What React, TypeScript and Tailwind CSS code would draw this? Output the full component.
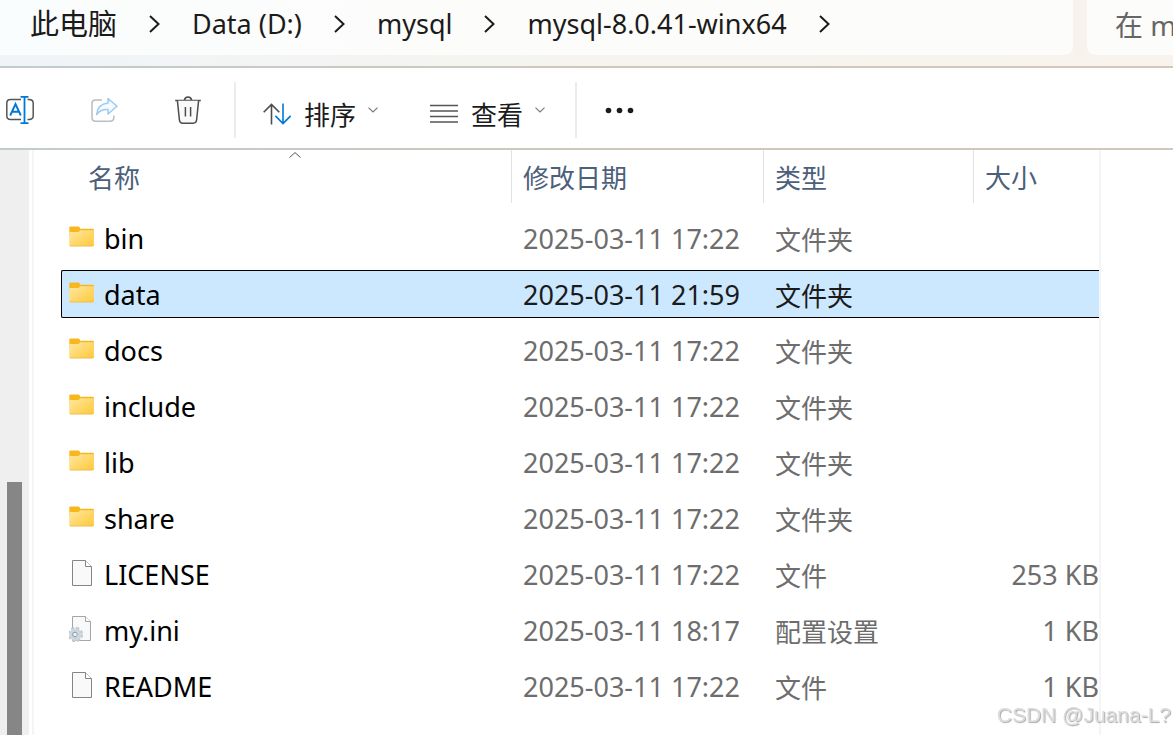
import React, { useState } from 'react';

type FileKind = 'folder' | 'file' | 'config';

const path = ['此电脑', 'Data (D:)', 'mysql', 'mysql-8.0.41-winx64'];

const files: { name: string; date: string; type: string; size: string; kind: FileKind }[] = [
    { name: 'bin', date: '2025-03-11 17:22', type: '文件夹', size: '', kind: 'folder' },
    { name: 'data', date: '2025-03-11 21:59', type: '文件夹', size: '', kind: 'folder' },
    { name: 'docs', date: '2025-03-11 17:22', type: '文件夹', size: '', kind: 'folder' },
    { name: 'include', date: '2025-03-11 17:22', type: '文件夹', size: '', kind: 'folder' },
    { name: 'lib', date: '2025-03-11 17:22', type: '文件夹', size: '', kind: 'folder' },
    { name: 'share', date: '2025-03-11 17:22', type: '文件夹', size: '', kind: 'folder' },
    { name: 'LICENSE', date: '2025-03-11 17:22', type: '文件', size: '253 KB', kind: 'file' },
    { name: 'my.ini', date: '2025-03-11 18:17', type: '配置设置', size: '1 KB', kind: 'config' },
    { name: 'README', date: '2025-03-11 17:22', type: '文件', size: '1 KB', kind: 'file' },
];

function FolderIcon() {
    return (
        <svg width="26" height="22" viewBox="0 0 26 22">
            <defs>
                <linearGradient id="folder" x1="0" y1="0" x2="1" y2="1">
                    <stop offset="0" stopColor="#ffe8a3" />
                    <stop offset="1" stopColor="#ffc937" />
                </linearGradient>
            </defs>
            <path d="M.3 1.6Q.3 .4 1.5 .4H9.3Q10.6 .4 11.2 2.8H23.8Q24.9 2.8 24.9 3.9V10H.3z" fill="#f8b71d" />
            <path d="M.3 6H8.6Q9.5 6 10.1 5.4L11.3 4.2H24.9V19Q24.9 20.2 23.7 20.2H1.5Q.3 20.2 .3 19z" fill="url(#folder)" />
            <path d="M.7 19.4Q1.1 20 1.7 20H23.5Q24.3 20 24.7 19.4" fill="none" stroke="#eab54a" strokeWidth=".7" />
        </svg>
    );
}

function PageIcon({ gear = false }: { gear?: boolean }) {
    return (
        <svg width="26" height="30" viewBox="0 0 26 30">
            <path
                d={gear ? 'M3.5 2.5H16.5L21.5 7.5V26.5H3.5z' : 'M3.5 2.5H16.5L22.5 8.5V27.5H3.5z'}
                fill="#f9f9f9"
                stroke={gear ? '#a5a5a5' : '#858585'}
            />
            <path
                d={gear ? 'M16.5 2.5V7.5H21.5' : 'M16.5 2.5V8.5H22.5'}
                fill="#fff"
                stroke={gear ? '#a5a5a5' : '#858585'}
            />
            {gear && (
                <g>
                    <circle cx="6.4" cy="20.5" r="6.2" fill="none" stroke="#bcc8d1" strokeWidth="3" strokeDasharray="2.9 1.97" />
                    <circle cx="6.4" cy="20.5" r="4.4" fill="none" stroke="#ccd6de" strokeWidth="3.6" />
                    <circle cx="6" cy="20.5" r="2.3" fill="#eef1f3" stroke="#8797a4" strokeWidth="1" />
                </g>
            )}
        </svg>
    );
}

function ChevronRight() {
    return (
        <svg width="11" height="18" viewBox="0 0 11 18" fill="none" stroke="#1b1b1b" strokeWidth="2">
            <path d="M1 1L9.5 9L1 17" />
        </svg>
    );
}

function ChevronDown() {
    return (
        <svg className="mb-2" width="10" height="6" viewBox="0 0 10 6" fill="none" stroke="#777" strokeWidth="1.1">
            <path d="M.5 .7L5 5L9.5 .7" />
        </svg>
    );
}

function Divider() {
    return <div className="h-14 w-0.5 shrink-0 bg-[#ececec]" />;
}

export default function App() {
    const [selected, setSelected] = useState('data');

    return (
        <div className="flex min-h-screen flex-col overflow-hidden bg-white font-['Noto_Sans','Noto_Sans_CJK_SC',sans-serif] text-[#1b1b1b]">
            {/* Address bar */}
            <header className="flex h-[66px] items-start gap-3.5 bg-linear-to-r from-[#f0f4f7] via-[#f5f4ef] to-[#f8f3ec]">
                <nav className="flex h-[55px] min-w-0 flex-1 items-center rounded-br-lg bg-linear-to-r from-[#fafdfd] via-[#fcfcfa] to-[#fcfcfa] pb-2 pl-[30px] text-[27px] leading-8 whitespace-nowrap">
                    {path.map((part, i) => (
                        <React.Fragment key={part}>
                            <a href="#" className={i === 0 ? 'text-[29px]' : ''}>{part}</a>
                            <span className="mx-8"><ChevronRight /></span>
                        </React.Fragment>
                    ))}
                </nav>
                <input
                    type="text"
                    aria-label="搜索"
                    placeholder="在 m"
                    className="h-[55px] w-[86px] rounded-bl-lg bg-[#fcfcfa] pb-1.5 pl-7 text-[28px] outline-none placeholder:text-[#666]"
                />
            </header>

            {/* Toolbar, with a tinted line above and below */}
            <div className="bg-linear-to-r from-[#c2cccf] via-[#cec8bb] to-[#d2c8ba] py-0.5">
                <div className="flex h-20 items-center bg-white pt-1 pl-1.5">
                    <div className="flex items-center gap-14">
                        <button aria-label="重命名">
                            <svg width="28" height="28" viewBox="0 0 28 28" fill="none" strokeWidth="1.5">
                                <path d="M15 3.5H4.5Q.8 3.5 .8 7.2V19.8Q.8 23.5 4.5 23.5H15M21.5 3.5H23Q27.2 3.5 27.2 7.2V19.8Q27.2 23.5 23 23.5H21.5" stroke="#555" />
                                <path d="M4.2 19.5L9.5 8L14.8 19.5M6 15.8H13" stroke="#0078d4" strokeWidth="1.9" />
                                <path d="M14.5 .9H22.5M14.5 27.1H22.5M18.5 1V27" stroke="#0078d4" strokeWidth="1.8" />
                            </svg>
                        </button>
                        <button aria-label="共享">
                            <svg width="28" height="28" viewBox="0 0 28 28" fill="none" strokeWidth="1.5" strokeLinejoin="round">
                                <path d="M12 4H5.6Q2 4 2 7.6V21.4Q2 25.2 5.6 25.2H20Q23.8 25.2 23.8 21.4V19.5" stroke="#bdbdbd" />
                                <path d="M18 2.5L27 10.2L18 18V13.5Q10.5 13 6.6 18.5Q7.6 8 18 7z" fill="#f5faff" stroke="#9bcbf2" />
                            </svg>
                        </button>
                        <button aria-label="删除">
                            <svg width="28" height="28" viewBox="0 0 28 28" fill="none" stroke="#4d4d4d" strokeWidth="1.5">
                                <path d="M1.2 4.5H26.8M10.4 4.2Q10.8 1 14 1T17.6 4.2" />
                                <path d="M3.4 4.7L5.4 24Q5.8 27.2 8.8 27.2H19.2Q22.2 27.2 22.6 24L24.6 4.7" fill="#fafafa" />
                                <path d="M11.4 11V20.5M16.6 11V20.5" />
                            </svg>
                        </button>
                    </div>
                    <div className="ml-8"><Divider /></div>
                    <button className="ml-[27px] flex items-center pt-2">
                        <svg width="28" height="22" viewBox="0 0 28 22" fill="none" strokeWidth="1.6">
                            <path d="M8.5 21.5V1.5M.7 9.2L8.5 1.4L16.3 9.2" stroke="#4d4d4d" />
                            <path d="M20 .5V20.5M12.4 12.9L20 20.5L27.6 12.9" stroke="#0078d4" />
                        </svg>
                        <span className="mr-3 ml-[13px] pt-0.5 text-[26px] leading-8">排序</span>
                        <ChevronDown />
                    </button>
                    <button className="ml-[52px] flex items-center pt-2">
                        <svg width="28" height="20" viewBox="0 0 28 20" stroke="#555" strokeWidth="1.6">
                            <path d="M0 1.5H28M0 7H28M0 12.5H28M0 18H28" />
                        </svg>
                        <span className="mr-3 ml-[13px] pt-0.5 text-[26px] leading-8">查看</span>
                        <ChevronDown />
                    </button>
                    <div className="ml-[30px]"><Divider /></div>
                    <button aria-label="更多" className="ml-7">
                        <svg width="30" height="8" viewBox="0 0 30 8" fill="#1b1b1b">
                            <circle cx="3.5" cy="4.5" r="2.8" />
                            <circle cx="14.5" cy="4.5" r="2.8" />
                            <circle cx="25.5" cy="4.5" r="2.8" />
                        </svg>
                    </button>
                </div>
            </div>

            <div className="flex flex-1">
                {/* Navigation pane scrollbar */}
                <div className="flex w-[29px] shrink-0 flex-col bg-[#efefef] px-[7px] pt-[332px]">
                    <div className="flex-1 bg-[#868686]" />
                </div>

                <main className="ml-[3px] min-w-0 flex-1 border-x-2 border-[#f5f5f5] pl-[27px]">
                    <table className="w-full table-fixed border-collapse text-left text-[27px] whitespace-nowrap">
                        <colgroup>
                            <col />
                            <col className="w-[252px]" />
                            <col className="w-[210px]" />
                            <col className="w-[126px]" />
                        </colgroup>
                        <thead className="text-[26px] leading-8 text-[#4c607a]">
                            <tr>
                                <th className="p-0 pb-[7px] font-normal">
                                    <div className="relative ml-[17px] flex h-[53px] items-center pt-0.5 pl-2.5">
                                        名称
                                        <svg className="absolute top-0.5 left-1/2 -translate-x-1/2" width="12" height="6" viewBox="0 0 12 6" fill="none" stroke="#555">
                                            <path d="M.5 5.5L6 .6L11.5 5.5" />
                                        </svg>
                                    </div>
                                </th>
                                {['修改日期', '类型', '大小'].map(title => (
                                    <th key={title} className="p-0 pb-[7px] font-normal">
                                        <div className="flex h-[53px] items-center border-l border-[#e2e2e2] pt-0.5 pl-[11px]">{title}</div>
                                    </th>
                                ))}
                            </tr>
                        </thead>
                        <tbody>
                            {files.map(file => {
                                const active = file.name === selected;
                                const cell = active
                                    ? 'flex h-12 items-center border-y border-black bg-[#cce8ff] pt-0.5 text-[#1b1b1b]'
                                    : 'flex h-12 items-center border-y border-transparent pt-0.5 text-[#6d6d6d]';
                                return (
                                    <tr key={file.name} onClick={() => setSelected(file.name)}>
                                        <td className="px-0 py-1">
                                            <div className={active ? 'flex h-12 items-center rounded-l-xs border-y border-l border-black bg-[#cce8ff] pt-0.5 pl-[7px] text-black' : 'flex h-12 items-center pt-0.5 pl-2 text-black'}>
                                                <span className="mr-[9px] mb-1">
                                                    {file.kind === 'folder' ? <FolderIcon /> : <PageIcon gear={file.kind === 'config'} />}
                                                </span>
                                                {file.name}
                                            </div>
                                        </td>
                                        <td className="px-0 py-1"><div className={cell}><span className="pl-3">{file.date}</span></div></td>
                                        <td className="px-0 py-1"><div className={cell}><span className="pt-0.5 pl-3 text-[26px]">{file.type}</span></div></td>
                                        <td className="px-0 py-1"><div className={cell}><span className="ml-auto">{file.size}</span></div></td>
                                    </tr>
                                );
                            })}
                        </tbody>
                    </table>
                </main>

                {/* Empty details pane */}
                <aside className="w-[72px] shrink-0" />
            </div>

            <p className="fixed right-0.5 bottom-1.5 font-['Liberation_Sans',sans-serif] text-[21px] leading-7 text-[#dcdcdc] [text-shadow:1px_1px_1px_#aaa]">
                CSDN @Juana-L?
            </p>
        </div>
    );
}
